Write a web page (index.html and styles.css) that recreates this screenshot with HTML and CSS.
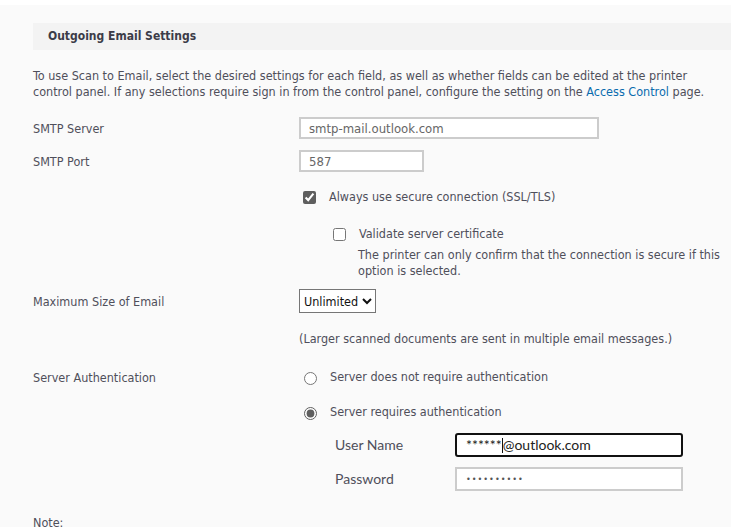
FILE: index.html
```html
<!DOCTYPE html>
<html lang="en">
<head>
    <meta charset="UTF-8">
    <meta name="viewport" content="width=device-width, initial-scale=1.0">
    <title>Outgoing Email Settings</title>
    <link rel="stylesheet" href="styles.css">
</head>
<body>
    <div class="page">
        <h2 class="section-title">Outgoing Email Settings</h2>

        <p class="intro">To use Scan to Email, select the desired settings for each field, as well as whether fields can be edited at the printer control panel. If any selections require sign in from the control panel, configure the setting on the <a href="#" class="link">Access Control</a> page.</p>

        <div class="row row-server">
            <label class="label" for="smtpServer">SMTP Server</label>
            <div class="control">
                <input class="text-input server-input" id="smtpServer" type="text" value="smtp-mail.outlook.com">
            </div>
        </div>

        <div class="row row-port">
            <label class="label" for="smtpPort">SMTP Port</label>
            <div class="control">
                <input class="text-input port-input" id="smtpPort" type="text" value="587">
            </div>
        </div>

        <div class="row row-ssl">
            <div class="label"></div>
            <div class="control">
                <label class="check"><input type="checkbox" checked> <span>Always use secure connection (SSL/TLS)</span></label>
            </div>
        </div>

        <div class="row row-validate">
            <div class="label"></div>
            <div class="control indent">
                <label class="check"><input type="checkbox"> <span>Validate server certificate</span></label>
                <p class="help">The printer can only confirm that the connection is secure if this option is selected.</p>
            </div>
        </div>

        <div class="row row-size">
            <label class="label" for="maxSize">Maximum Size of Email</label>
            <div class="control">
                <select class="select" id="maxSize">
                    <option>Unlimited</option>
                </select>
            </div>
        </div>

        <div class="row row-size-note">
            <div class="label"></div>
            <div class="control">(Larger scanned documents are sent in multiple email messages.)</div>
        </div>

        <div class="row row-auth">
            <div class="label">Server Authentication</div>
            <div class="control">
                <label class="check"><input type="radio" name="auth"> <span>Server does not require authentication</span></label>
            </div>
        </div>

        <div class="row row-auth2">
            <div class="label"></div>
            <div class="control">
                <label class="check"><input type="radio" name="auth" checked> <span>Server requires authentication</span></label>
            </div>
        </div>

        <div class="row row-user">
            <div class="label"></div>
            <div class="control sub-field">
                <label class="sub-label" for="userName">User Name</label>
                <div class="text-input cred-input focused" id="userName">******<span class="caret"></span>@outlook.com</div>
            </div>
        </div>

        <div class="row row-pass">
            <div class="label"></div>
            <div class="control sub-field">
                <label class="sub-label" for="password">Password</label>
                <input class="text-input cred-input password-input" id="password" type="password" value="1234567890">
            </div>
        </div>

        <p class="note">Note:</p>
    </div>
</body>
</html>
```

FILE: styles.css
```css
body {
    margin: 0;
    background: #ffffff;
    font-family: "DejaVu Sans Condensed", "Liberation Sans", sans-serif;
    font-size: 12.5px;
    color: #4f4f5a;
}
.page {
    margin-top: 5px;
    background: #fafafa;
    padding: 18px 0 20px 33px;
    min-height: 520px;
}
.section-title {
    margin: 0;
    background: #f3f3f3;
    height: 27px;
    line-height: 27px;
    padding-left: 15px;
    font-size: 12px;
    font-weight: bold;
    color: #3c3c48;
}
.intro {
    margin: 18px 0 0 0;
    line-height: 16px;
    width: 690px;
}
.link {
    color: #0a6cae;
    text-decoration: none;
}
.row {
    display: flex;
    align-items: center;
}
.label {
    width: 266px;
    flex-shrink: 0;
}
.control {
    line-height: 16px;
}
.text-input {
    box-sizing: border-box;
    height: 22px;
    border: 2px solid #cccccc;
    background: #ffffff;
    padding: 0 8px;
    font-family: "DejaVu Sans Condensed", "Liberation Sans", sans-serif;
    font-size: 13px;
    color: #666666;
    outline: none;
}
.server-input {
    width: 300px;
}
.port-input {
    width: 125px;
}
.row-server {
    margin-top: 17px;
}
.row-port {
    margin-top: 11px;
}
.row-ssl {
    margin-top: 15px;
    height: 20px;
}
.row-validate {
    margin-top: 17px;
    align-items: flex-start;
}
.indent {
    padding-left: 30px;
}
.check {
    display: flex;
    align-items: center;
    height: 20px;
}
.check input {
    accent-color: #5e5e5e;
    margin-right: 13px;
}
.help {
    margin: 3px 0 0 29px;
    line-height: 16px;
    width: 368px;
}
.row-size {
    margin-top: 10px;
}
.select {
    height: 24px;
    font-family: "DejaVu Sans Condensed", "Liberation Sans", sans-serif;
    font-size: 12.5px;
    color: #111111;
    border: 1px solid #767676;
    border-radius: 0;
    background: #ffffff;
}
.row-size-note {
    margin-top: 18px;
}
.row-auth {
    margin-top: 20px;
    height: 20px;
}
.row-auth2 {
    margin-top: 15px;
    height: 20px;
}
.sub-field {
    display: flex;
    align-items: center;
    padding-left: 36px;
}
.sub-label {
    width: 120px;
    font-family: Lato, "Open Sans", sans-serif;
    font-size: 14px;
}
.cred-input {
    width: 228px;
    height: 24px;
    font-family: Lato, "Open Sans", sans-serif;
    font-size: 14px;
    padding: 0 9px;
}
.password-input {
    font-family: "DejaVu Sans Condensed", sans-serif;
    font-size: 9px;
    letter-spacing: 1px;
    color: #555555;
}
.focused {
    display: flex;
    align-items: center;
    border-color: #111111;
    border-radius: 3px;
    color: #222222;
}
.caret {
    display: inline-block;
    width: 1px;
    height: 15px;
    background: #111111;
}
.row-user {
    margin-top: 11px;
}
.row-pass {
    margin-top: 10px;
}
.note {
    margin: 24px 0 0 0;
    line-height: 16px;
}
```
